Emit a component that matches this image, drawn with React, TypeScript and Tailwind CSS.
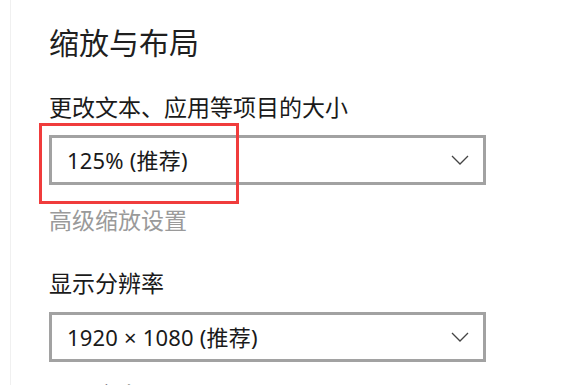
import React from "react";

const Chevron = () => (
  <svg width="18" height="10" viewBox="0 0 18 10" fill="none">
    <polyline points="1,1 9,9 17,1" stroke="#444" strokeWidth="1.3" />
  </svg>
);

const Dropdown = ({ text }: { text: string }) => (
  <div className="flex h-[50px] w-[437px] items-center justify-between border-[3px] border-[#a2a2a2] bg-white pl-[15px] pr-[14px]">
    <span
      className="text-[22px] leading-none tracking-[0.2px] text-[#1a1a1a]"
      style={{ fontFamily: '"Noto Sans", "Noto Sans CJK SC", sans-serif' }}
    >
      {text}
    </span>
    <Chevron />
  </div>
);

export default function App() {
  return (
    <div
      className="relative h-[385px] w-[568px] overflow-hidden bg-white"
      style={{ fontFamily: '"Noto Sans CJK SC", "Noto Sans", sans-serif' }}
    >
      <div className="flex h-full">
        <div className="w-[11px] shrink-0 border-r border-[#f0f0f0]" />
        <div className="flex flex-col pl-[38px]">
          <div className="mt-[26px] text-[30px] leading-[30px] text-[#1f1f1f]">缩放与布局</div>
          <div className="mt-[39px] text-[23px] leading-[23px] text-[#1a1a1a]">更改文本、应用等项目的大小</div>
          <div className="mt-[17px]">
            <Dropdown text="125% (推荐)" />
          </div>
          <div className="mt-[23px] text-[23px] leading-[23px] text-[#9a9a9a]">高级缩放设置</div>
          <div className="mt-[40px] text-[23px] leading-[23px] text-[#1a1a1a]">显示分辨率</div>
          <div className="mt-[18px]">
            <Dropdown text="1920 × 1080 (推荐)" />
          </div>
          <div className="mt-[21px] text-[23px] leading-[23px] text-[#1a1a1a]">显示方向</div>
        </div>
      </div>
      <div className="absolute left-[39px] top-[123px] h-[81px] w-[200px] border-[3px] border-[#f03c3c]" />
    </div>
  );
}
